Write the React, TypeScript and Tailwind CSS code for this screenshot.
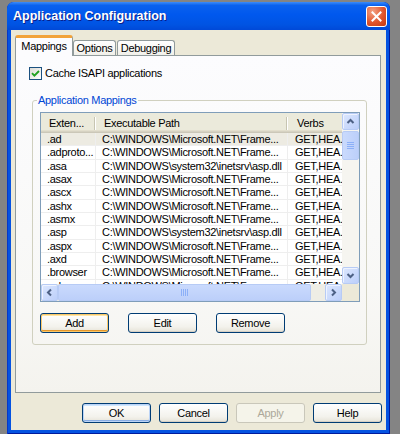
import React from "react";

const NET = "C:\\WINDOWS\\Microsoft.NET\\Frame...";
const ASP = "C:\\WINDOWS\\system32\\inetsrv\\asp.dll";
const VERBS = "GET,HEA...";

const MAPPINGS = [
  { ext: ".ad", path: NET },
  { ext: ".adproto...", path: NET },
  { ext: ".asa", path: ASP },
  { ext: ".asax", path: NET },
  { ext: ".ascx", path: NET },
  { ext: ".ashx", path: NET },
  { ext: ".asmx", path: NET },
  { ext: ".asp", path: ASP },
  { ext: ".aspx", path: NET },
  { ext: ".axd", path: NET },
  { ext: ".browser", path: NET },
  { ext: ".cd", path: NET },
];

type Variant = "normal" | "focus" | "default" | "disabled";

function XPButton({ children, variant = "normal" }: { children: React.ReactNode; variant?: Variant }) {
  const look =
    variant === "disabled"
      ? "border-[#C9C7BA] bg-[#F5F4EA] text-[#ACA899]"
      : variant === "focus"
        ? "border-[#003C74] bg-[linear-gradient(to_bottom,#FFFFFF,#F3F2EC_70%,#E6E3D8)] text-black shadow-[inset_0_0_0_1px_#F9C86B,inset_0_2px_0_#FFE7A8,inset_0_-2px_0_#E5972B]"
        : variant === "default"
          ? "border-[#003C74] bg-[linear-gradient(to_bottom,#FFFFFF,#F3F2EC_70%,#E6E3D8)] text-black shadow-[inset_0_0_0_1px_#BCD4F6,inset_0_2px_0_#CEE7FF,inset_0_-2px_0_#89ADE4]"
          : "border-[#003C74] bg-[linear-gradient(to_bottom,#FFFFFF,#F3F2EC_70%,#E6E3D8)] text-black shadow-[inset_0_-1px_0_#D6D0C5]";
  return (
    <button className={`w-[69px] h-[20px] rounded-[3px] border text-[11px] flex items-center justify-center ${look}`}>
      {children}
    </button>
  );
}

function Arrow({ dir }: { dir: "up" | "down" | "left" | "right" }) {
  const d =
    dir === "up" ? "M1.5 6 L4.5 3 L7.5 6" :
    dir === "down" ? "M1.5 3 L4.5 6 L7.5 3" :
    dir === "left" ? "M6 1.5 L3 4.5 L6 7.5" : "M3 1.5 L6 4.5 L3 7.5";
  return (
    <svg width="9" height="9" viewBox="0 0 9 9">
      <path d={d} fill="none" stroke="#4D6185" strokeWidth="2" />
    </svg>
  );
}

const SCROLL_BTN =
  "w-[17px] h-[17px] flex items-center justify-center rounded-[2px] border border-[#B7CBF5] bg-[linear-gradient(135deg,#DCE7FE,#BCCFFA)] shadow-[inset_1px_1px_0_#EEF3FE]";

function VScroll() {
  return (
    <div className="w-[17px] h-full flex flex-col bg-[#F6F5F0]">
      <div className={SCROLL_BTN}><Arrow dir="up" /></div>
      <div className="mt-[1px] w-[17px] h-[29px] flex flex-col items-center justify-center gap-[1px] rounded-[2px] border border-[#B7CBF5] bg-[linear-gradient(to_right,#CADAFD,#BCCFFA)]">
        <div className="w-[7px] h-[1px] bg-[#8CB0F8]" />
        <div className="w-[7px] h-[1px] bg-[#8CB0F8]" />
        <div className="w-[7px] h-[1px] bg-[#8CB0F8]" />
        <div className="w-[7px] h-[1px] bg-[#8CB0F8]" />
      </div>
      <div className="flex-1" />
      <div className={SCROLL_BTN}><Arrow dir="down" /></div>
    </div>
  );
}

function HScroll() {
  return (
    <div className="w-[301px] h-[17px] flex bg-[#EEEDE5]">
      <div className={SCROLL_BTN}><Arrow dir="left" /></div>
      <div className="w-[253px] h-[17px] flex items-center justify-center gap-[1px] rounded-[2px] border border-[#B7CBF5] bg-[linear-gradient(to_bottom,#CADAFD,#BCCFFA)]">
        <div className="w-[1px] h-[7px] bg-[#8CB0F8]" />
        <div className="w-[1px] h-[7px] bg-[#8CB0F8]" />
        <div className="w-[1px] h-[7px] bg-[#8CB0F8]" />
        <div className="w-[1px] h-[7px] bg-[#8CB0F8]" />
      </div>
      <div className="flex-1" />
      <div className={SCROLL_BTN}><Arrow dir="right" /></div>
    </div>
  );
}

function HeaderSep() {
  return (
    <div className="flex self-center">
      <div className="w-[1px] h-[13px] bg-[#C7C5B2]" />
      <div className="w-[1px] h-[13px] bg-white" />
    </div>
  );
}

function MappingsList() {
  return (
    <div className="w-[320px] h-[190px] border border-[#7F9DB9] bg-white flex flex-col">
      <div className="flex h-[171px]">
        <div className="w-[301px] h-[171px] overflow-hidden">
          <div className="flex h-[20px] bg-[#EBEADB] shadow-[inset_0_-1px_0_#CBC7B8,inset_0_-2px_0_#D6D2C2,inset_0_-3px_0_#E2DECD]">
            <div className="w-[53px] pl-[8px] flex items-center whitespace-nowrap">Exten...</div>
            <HeaderSep />
            <div className="w-[190px] pl-[8px] flex items-center whitespace-nowrap">Executable Path</div>
            <HeaderSep />
            <div className="flex-1 pl-[9px] flex items-center whitespace-nowrap">Verbs</div>
          </div>
          {MAPPINGS.map((m, i) => (
            <div
              key={m.ext}
              className={`flex h-[13.33px] border-b border-[#EEEEEE] ${i === 0 ? "bg-[#EDEBE2]" : ""}`}
            >
              <div className="w-[55px] pl-[6px] flex items-center border-r border-[#EEEEEE] whitespace-nowrap overflow-hidden">{m.ext}</div>
              <div className="w-[192px] pl-[6px] flex items-center border-r border-[#EEEEEE] whitespace-nowrap overflow-hidden">{m.path}</div>
              <div className="flex-1 pl-[7px] flex items-center whitespace-nowrap overflow-hidden">{VERBS}</div>
            </div>
          ))}
        </div>
        <VScroll />
      </div>
      <div className="flex h-[17px]">
        <HScroll />
        <div className="w-[17px] h-[17px] bg-[#ECE9D8]" />
      </div>
    </div>
  );
}

export default function App() {
  return (
    <div className="w-[400px] h-[434px] bg-[#848484] pt-[2px] pl-[7px] overflow-hidden">
      <div className="w-[383px] h-[432px] flex flex-col rounded-t-[7px] overflow-hidden bg-[#0553E1] shadow-[inset_1px_0_0_#0837C9,inset_-1px_0_0_#001A9C,inset_0_-1px_0_#001A9C]">
        {/* title bar */}
        <div className="h-[28px] flex items-center pl-[6px] pr-[3px] bg-[linear-gradient(to_bottom,#3C8CF9_0%,#0A61EE_12%,#0058EE_45%,#0054E3_80%,#0049D8_100%)]">
          <span className="font-['Liberation_Sans',Arial,sans-serif] font-bold text-[12.5px] text-white [text-shadow:1px_1px_0_#0A1E8A]">
            Application Configuration
          </span>
          <div className="ml-auto w-[21px] h-[21px] rounded-[3px] border border-white flex items-center justify-center bg-[radial-gradient(circle_at_30%_25%,#F3A284,#E0552D_55%,#C23810)]">
            <svg width="11" height="11" viewBox="0 0 11 11">
              <path d="M1.5 1.5 L9.5 9.5 M9.5 1.5 L1.5 9.5" stroke="white" strokeWidth="2" strokeLinecap="square" />
            </svg>
          </div>
        </div>

        {/* body */}
        <div className="flex-1 mx-[4px] mb-[4px] bg-[#ECE9D8] flex flex-col font-['Liberation_Sans',Arial,sans-serif] text-[11px] tracking-[-0.3px] text-black">
          {/* tabs */}
          <div className="h-[25px] pl-[4px] flex items-end">
            <div className="relative z-10 -mb-[1px] w-[58px] h-[21px] rounded-t-[3px] border-x border-[#919B9C] border-t-[3px] border-t-[#F2A33A] bg-[#FCFCFE] flex items-center justify-center pb-[2px]">
              Mappings
            </div>
            <div className="w-[43px] h-[15px] rounded-t-[3px] border-x border-t border-[#919B9C] bg-[linear-gradient(to_bottom,#FFFFFF,#F1F0EA)] flex items-center justify-center">
              Options
            </div>
            <div className="ml-[1px] w-[58px] h-[15px] rounded-t-[3px] border-x border-t border-[#919B9C] bg-[linear-gradient(to_bottom,#FFFFFF,#F1F0EA)] flex items-center justify-center">
              Debugging
            </div>
          </div>

          {/* panel */}
          <div className="ml-[4px] w-[366px] h-[338px] border border-[#919B9C] bg-[linear-gradient(to_bottom,#FCFCFE,#F8F8F6_70%,#F4F3EE)] pt-[11px] pl-[13px]">
            <div className="flex items-center gap-[3px] h-[13px]">
              <div className="w-[13px] h-[13px] border border-[#1C5180] bg-[linear-gradient(135deg,#DCDBD5,#FFFFFF)] flex items-center justify-center">
                <svg width="9" height="9" viewBox="0 0 9 9">
                  <path d="M1 4.2 L3.4 6.6 L8 2" fill="none" stroke="#21A121" strokeWidth="1.9" />
                </svg>
              </div>
              <span>Cache ISAPI applications</span>
            </div>

            {/* group box */}
            <div className="relative mt-[20px] ml-[3px] w-[335px] h-[245px] rounded-[3px] border border-[#D0D0BF] pt-[11px] pl-[7px]">
              <span className="absolute -top-[7px] left-[4px] px-[1px] bg-[#FBFBFC] text-[#0046D5] leading-[13px]">
                Application Mappings
              </span>
              <MappingsList />
              <div className="mt-[11px] flex gap-[19px]">
                <XPButton variant="focus">Add</XPButton>
                <XPButton>Edit</XPButton>
                <XPButton>Remove</XPButton>
              </div>
            </div>
          </div>

          {/* dialog buttons */}
          <div className="mt-[10px] pr-[4px] flex justify-end gap-[8px]">
            <XPButton variant="default">OK</XPButton>
            <XPButton>Cancel</XPButton>
            <XPButton variant="disabled">Apply</XPButton>
            <XPButton>Help</XPButton>
          </div>
        </div>
      </div>
    </div>
  );
}
